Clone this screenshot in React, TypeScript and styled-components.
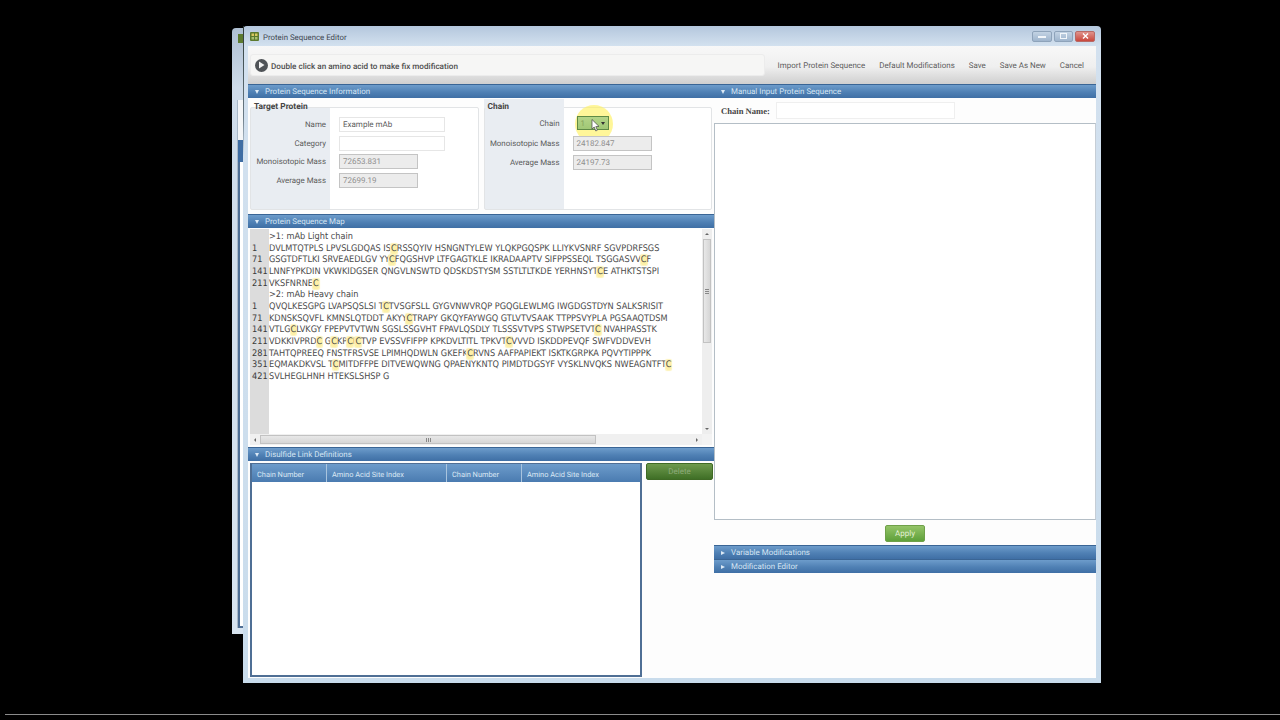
import React from "react";
import styled, { createGlobalStyle } from "styled-components";

const Global = createGlobalStyle`
  html, body { margin: 0; padding: 0; background: #000; }
  body { width: 1280px; height: 720px; overflow: hidden; font-family: Roboto, "Noto Sans", sans-serif; text-rendering: geometricPrecision; }
`;

const Desktop = styled.div`
  position: relative;
  width: 1280px;
  height: 720px;
  box-sizing: border-box;
  padding: 26px 0 0 243px;
  background: #000;
`;
const BackWindow = styled.div`
  position: absolute;
  left: 232px;
  top: 28px;
  width: 20px;
  height: 606px;
  background: linear-gradient(#aebfd2 0, #cfdcea 60px, #d8e4f0 100%);
  border-radius: 4px 0 0 0;
`;
const BackIcon = styled.div`
  position: absolute;
  left: 6px;
  top: 6px;
  width: 6px;
  height: 9px;
  background: #5c7a2e;
`;
const BackTab = styled.div`
  position: absolute;
  left: 5px;
  top: 72px;
  width: 15px;
  height: 528px;
  background: #f4f6f8;
  border-left: 1px solid #a9b8c8;
  &::before {
    content: "";
    position: absolute;
    left: 0;
    top: 40px;
    width: 15px;
    height: 22px;
    background: #3f6da3;
  }
  &::after {
    content: "";
    position: absolute;
    left: 0;
    top: 62px;
    width: 15px;
    height: 466px;
    box-sizing: border-box;
    border-left: 2px solid #4f6f95;
    border-bottom: 2px solid #4f6f95;
    background: #fff;
  }
`;
const BottomLine = styled.div`
  position: absolute;
  left: 5px;
  right: 0;
  top: 714px;
  height: 1px;
  background: #8b8b8b;
`;
const Window = styled.div`
  position: relative;
  width: 858px;
  height: 657px;
  box-sizing: border-box;
  padding: 0 5px 5px;
  background: linear-gradient(#b4c7dd 0, #d3e1ef 20px, #c9dcec 100%);
  border-radius: 4px 4px 0 0;
  display: flex;
  flex-direction: column;
  &::before {
    content: "";
    position: absolute;
    left: 0;
    top: 0;
    width: 1px;
    height: 130px;
    background: linear-gradient(#2f3b38, #6a7a86 70%, transparent);
  }
`;
const TitleBar = styled.div`
  height: 20px;
  display: flex;
  align-items: center;
  gap: 4px;
  margin-left: 2px;
`;
const TitleText = styled.span`
  flex: 1;
  padding-top: 2px;
  font-size: 7.85px;
  color: #3f4650;
`;
const WinControls = styled.div`
  display: flex;
  gap: 2px;
  margin-right: 1px;
`;
const WinBtn = styled.div<{ $w: number; $close?: boolean }>`
  width: ${(p) => p.$w}px;
  height: 11px;
  box-sizing: border-box;
  display: flex;
  align-items: center;
  justify-content: center;
  border: 1px solid ${(p) => (p.$close ? "#b86a66" : "#8ea3ba")};
  border-radius: 2px;
  background: ${(p) =>
    p.$close ? "linear-gradient(#e0938c,#c9473d)" : "linear-gradient(#c3d3e4,#9fb5cd)"};
  color: #fff;
`;
const Content = styled.div`
  flex: 1;
  min-height: 0;
  display: flex;
  flex-direction: column;
  background: #fdfdfd;
`;
const Toolbar = styled.div`
  height: 38px;
  box-sizing: border-box;
  padding: 8px 12px 8px 2px;
  display: flex;
  align-items: center;
  background: linear-gradient(#f8f8f8, #efefef 55%, #cfcfcf);
`;
const Hint = styled.div`
  width: 515px;
  height: 22px;
  flex: none;
  box-sizing: border-box;
  padding-left: 4px;
  display: flex;
  align-items: center;
  gap: 3px;
  border-radius: 3px;
  background: #f6f6f5;
  border: 1px solid #ececec;
  font-size: 8.15px;
  font-weight: 500;
  color: #4d4d4d;
  white-space: nowrap;
`;
const HintText = styled.span`
  padding-top: 1px;
`;
const PlayIcon = styled.div`
  width: 13px;
  height: 13px;
  border-radius: 50%;
  background: #4f5357;
  display: flex;
  align-items: center;
  justify-content: center;
`;
const ToolActions = styled.div`
  flex: 1;
  display: flex;
  justify-content: flex-end;
  gap: 14px;
  padding-top: 1px;
  font-size: 7.95px;
  color: #5c5c5c;
  white-space: nowrap;
`;
const Columns = styled.div`
  flex: 1;
  min-height: 0;
  display: flex;
`;
const LeftCol = styled.div`
  width: 466px;
  display: flex;
  flex-direction: column;
`;
const RightCol = styled.div`
  flex: 1;
  display: flex;
  flex-direction: column;
`;
const PanelHeader = styled.div`
  height: 14px;
  flex: none;
  box-sizing: border-box;
  padding: 0 0 0 6px;
  display: flex;
  align-items: center;
  gap: 6px;
  background: linear-gradient(#6d9ccb, #4f80b4 55%, #3f6fa5);
  border-top: 1px solid #3a6595;
  font-size: 7.95px;
  color: #d5e5f3;
`;
const Caret = styled.span<{ $open?: boolean }>`
  width: 0;
  height: 0;
  margin-left: 1px;
  ${(p) =>
    p.$open
      ? `border-left: 2.5px solid transparent; border-right: 2.5px solid transparent; border-top: 4px solid #dce9f5;`
      : `border-top: 2.5px solid transparent; border-bottom: 2.5px solid transparent; border-left: 4px solid #dce9f5;`}
`;
const InfoRow = styled.div`
  height: 116px;
  flex: none;
  box-sizing: border-box;
  padding: 9px 2px 4px;
  display: flex;
  gap: 5px;
`;
const Group = styled.div<{ $w: number; $tab?: boolean }>`
  position: relative;
  z-index: 0;
  width: ${(p) => p.$w}px;
  box-sizing: border-box;
  border: 1px solid #e2e4e6;
  border-radius: 2px;
  display: grid;
  grid-template-columns: 79px 1fr;
  background: linear-gradient(90deg, #e9edf2 79px, #fff 79px);
  ${(p) =>
    p.$tab &&
    `&::before { content: ""; position: absolute; left: -1px; top: -9px; width: 80px; height: 9px; background: #e9edf2; }`}
`;
const GroupTitle = styled.span`
  position: absolute;
  left: 3px;
  top: -6px;
  padding: 0 3px 0 0;
  font-size: 8.4px;
  font-weight: 700;
  color: #444;
`;
const Fields = styled.div<{ $top: number; $gap: number }>`
  grid-column: 1 / 3;
  padding-top: ${(p) => p.$top}px;
  display: flex;
  flex-direction: column;
  gap: ${(p) => p.$gap}px;
`;
const FieldRow = styled.div<{ $mb?: number }>`
  display: grid;
  grid-template-columns: 75px 1fr;
  column-gap: 13px;
  align-items: center;
  margin-bottom: ${(p) => p.$mb ?? 0}px;
`;
const FieldLabel = styled.span`
  font-size: 7.9px;
  text-align: right;
  color: #5a5a5a;
  white-space: nowrap;
`;
const TextBox = styled.div<{ $w: number; $disabled?: boolean }>`
  width: ${(p) => p.$w}px;
  height: 15px;
  box-sizing: border-box;
  padding-left: 3px;
  display: flex;
  align-items: center;
  background: ${(p) => (p.$disabled ? "#ececec" : "#fff")};
  border: 1px solid ${(p) => (p.$disabled ? "#c4c4c4" : "#e6e6e6")};
  font-size: 8px;
  color: ${(p) => (p.$disabled ? "#8f8f8f" : "#5d5d5d")};
`;
const Combo = styled.div`
  position: relative;
  width: 32px;
  height: 14px;
  margin-left: 4px;
  box-sizing: border-box;
  padding: 0 3px;
  display: flex;
  align-items: center;
  justify-content: space-between;
  border: 1px solid #5f8a45;
  background: linear-gradient(#b4d488, #a0c876);
  font-size: 8px;
  color: #86a35c;
`;
const Halo = styled.div`
  position: absolute;
  left: -3px;
  top: -12px;
  z-index: -1;
  width: 38px;
  height: 38px;
  border-radius: 50%;
  background: rgba(255, 240, 90, 0.62);
  pointer-events: none;
`;
const ComboValue = styled.span`
  position: relative;
`;
const ComboCaret = styled.span`
  position: relative;
  width: 0;
  height: 0;
  border-left: 2.5px solid transparent;
  border-right: 2.5px solid transparent;
  border-top: 3px solid #333;
`;
const Pointer = styled.svg`
  position: absolute;
  left: 13px;
  top: 2px;
`;
const MapBox = styled.div`
  flex: 1;
  min-height: 0;
  margin: 1px 2px 2px;
  display: grid;
  grid-template-columns: 1fr 10px;
  grid-template-rows: 1fr 11px;
  background: #fff;
`;
const SeqArea = styled.div`
  overflow: hidden;
  background: linear-gradient(90deg, #dcdcdc 19px, #fff 19px);
`;
const SeqLines = styled.div`
  padding-top: 3px;
`;
const SeqLine = styled.div`
  display: grid;
  grid-template-columns: 19px 1fr;
  height: 11.67px;
  line-height: 11.67px;
  font-family: "DejaVu Sans", Verdana, sans-serif;
  font-stretch: condensed;
  font-size: 9.1px;
  color: #4a4a4a;
  white-space: pre;
`;
const LineNo = styled.span`
  padding-left: 2px;
  color: #3a3a3a;
`;
const Cys = styled.span`
  background: #fdf0a8;
  box-shadow: 0 0 1px 1px #fdf3bb;
  border-radius: 1px;
`;
const VScroll = styled.div`
  grid-row: 1;
  grid-column: 2;
  display: flex;
  flex-direction: column;
  align-items: center;
  background: #eeeeee;
`;
const HScroll = styled.div`
  grid-row: 2;
  grid-column: 1;
  display: flex;
  align-items: center;
  background: #f0f0f0;
`;
const Corner = styled.div`
  grid-row: 2;
  grid-column: 2;
  background: #f3f3f3;
`;
const Arrow = styled.span<{ $dir: "up" | "down" | "left" | "right" }>`
  flex: none;
  width: 0;
  height: 0;
  margin: 4px;
  ${(p) =>
    p.$dir === "up"
      ? "border-left:2px solid transparent;border-right:2px solid transparent;border-bottom:2px solid #666;"
      : p.$dir === "down"
      ? "border-left:2px solid transparent;border-right:2px solid transparent;border-top:2px solid #666;"
      : p.$dir === "left"
      ? "border-top:2px solid transparent;border-bottom:2px solid transparent;border-right:2px solid #666;"
      : "border-top:2px solid transparent;border-bottom:2px solid transparent;border-left:2px solid #666;"}
`;
const VThumb = styled.div`
  width: 8px;
  height: 104px;
  flex: none;
  margin-bottom: auto;
  display: flex;
  align-items: center;
  justify-content: center;
  box-sizing: border-box;
  border: 1px solid #c2c2c2;
  background: linear-gradient(90deg, #e8e8e8, #d6d6d6);
  &::after { content: ""; width: 4px; height: 5px; background: repeating-linear-gradient(#888 0 1px, transparent 1px 2px); }
`;
const HThumb = styled.div`
  width: 336px;
  height: 9px;
  flex: none;
  margin-right: auto;
  display: flex;
  align-items: center;
  justify-content: center;
  box-sizing: border-box;
  border: 1px solid #c2c2c2;
  background: linear-gradient(#e8e8e8, #d6d6d6);
  &::after { content: ""; width: 5px; height: 4px; background: repeating-linear-gradient(90deg, #888 0 1px, transparent 1px 2px); }
`;
const DisulfideRow = styled.div`
  height: 217px;
  flex: none;
  box-sizing: border-box;
  padding: 2px 1px 0 2px;
  display: flex;
  gap: 4px;
`;
const LinkTable = styled.div`
  width: 392px;
  height: 214px;
  flex: none;
  box-sizing: border-box;
  border: 2px solid #4f6f95;
  border-top-width: 1px;
  background: #fff;
`;
const TableHead = styled.div`
  height: 18px;
  display: grid;
  grid-template-columns: 75px 120px 75px 1fr;
  background: linear-gradient(#6d9ccb, #4a7bb0);
`;
const HeadCell = styled.div`
  padding: 2px 0 0 5px;
  display: flex;
  align-items: center;
  border-right: 1px solid #a9c4de;
  font-size: 7.4px;
  color: #d9e7f4;
  &:last-child { border-right: 0; }
`;
const GreenButton = styled.div<{ $dark?: boolean; $w: number; $h: number }>`
  width: ${(p) => p.$w}px;
  height: ${(p) => p.$h}px;
  box-sizing: border-box;
  display: flex;
  align-items: center;
  justify-content: center;
  border-radius: 2px;
  font-size: 8px;
  border: 1px solid ${(p) => (p.$dark ? "#3f6a25" : "#6fa049")};
  color: ${(p) => (p.$dark ? "#8eab7a" : "#e3f0d4")};
  background: ${(p) =>
    p.$dark ? "linear-gradient(#6e9a4d,#3f6f26)" : "linear-gradient(#94c468,#5fa03a)"};
`;
const NameRow = styled.div`
  height: 25px;
  flex: none;
  box-sizing: border-box;
  padding: 4px 0 4px 7px;
  display: flex;
  align-items: center;
  gap: 6px;
`;
const NameLabel = styled.span`
  font-family: "Liberation Serif", serif;
  font-size: 8.6px;
  font-weight: 700;
  color: #444;
  white-space: nowrap;
`;
const NameInput = styled.div`
  width: 179px;
  height: 17px;
  box-sizing: border-box;
  background: #fff;
  border: 1px solid #efefef;
`;
const ManualArea = styled.div`
  height: 397px;
  flex: none;
  box-sizing: border-box;
  background: #fff;
  border: 1px solid #b4bec6;
  border-right-color: #c6ced6;
`;
const ApplyRow = styled.div`
  height: 25px;
  flex: none;
  display: flex;
  justify-content: center;
  padding-top: 5px;
  box-sizing: border-box;
`;

const sequences: [string, string][] = [
  ["", ">1: mAb Light chain"],
  ["1", "DVLMTQTPLS LPVSLGDQAS ISCRSSQYIV HSNGNTYLEW YLQKPGQSPK LLIYKVSNRF SGVPDRFSGS"],
  ["71", "GSGTDFTLKI SRVEAEDLGV YYCFQGSHVP LTFGAGTKLE IKRADAAPTV SIFPPSSEQL TSGGASVVCF"],
  ["141", "LNNFYPKDIN VKWKIDGSER QNGVLNSWTD QDSKDSTYSM SSTLTLTKDE YERHNSYTCE ATHKTSTSPI"],
  ["211", "VKSFNRNEC"],
  ["", ">2: mAb Heavy chain"],
  ["1", "QVQLKESGPG LVAPSQSLSI TCTVSGFSLL GYGVNWVRQP PGQGLEWLMG IWGDGSTDYN SALKSRISIT"],
  ["71", "KDNSKSQVFL KMNSLQTDDT AKYYCTRAPY GKQYFAYWGQ GTLVTVSAAK TTPPSVYPLA PGSAAQTDSM"],
  ["141", "VTLGCLVKGY FPEPVTVTWN SGSLSSGVHT FPAVLQSDLY TLSSSVTVPS STWPSETVTC NVAHPASSTK"],
  ["211", "VDKKIVPRDC GCKPCICTVP EVSSVFIFPP KPKDVLTITL TPKVTCVVVD ISKDDPEVQF SWFVDDVEVH"],
  ["281", "TAHTQPREEQ FNSTFRSVSE LPIMHQDWLN GKEFKCRVNS AAFPAPIEKT ISKTKGRPKA PQVYTIPPPK"],
  ["351", "EQMAKDKVSL TCMITDFFPE DITVEWQWNG QPAENYKNTQ PIMDTDGSYF VYSKLNVQKS NWEAGNTFTC"],
  ["421", "SVLHEGLHNH HTEKSLSHSP G"],
];

const Residues = ({ text }: { text: string }) => {
  if (text.startsWith(">")) return <span>{text}</span>;
  const parts = text.split("C");
  return (
    <span>
      {parts.map((part, i) => (
        <React.Fragment key={i}>
          {part}
          {i < parts.length - 1 && <Cys>C</Cys>}
        </React.Fragment>
      ))}
    </span>
  );
};

export default function App() {
  return (
    <Desktop>
      <Global />
      <BackWindow>
        <BackIcon />
        <BackTab />
      </BackWindow>
      <BottomLine />
      <Window>
        <TitleBar>
          <svg width="9" height="9" viewBox="0 0 9 9">
            <rect width="9" height="9" rx="1" fill="#5c7a2e" />
            <rect x="1.5" y="1.5" width="2.5" height="2.5" fill="#d9c860" />
            <rect x="5" y="1.5" width="2.5" height="2.5" fill="#d9c860" />
            <rect x="1.5" y="5" width="2.5" height="2.5" fill="#a8c070" />
            <rect x="5" y="5" width="2.5" height="2.5" fill="#a8c070" />
          </svg>
          <TitleText>Protein Sequence Editor</TitleText>
          <WinControls>
            <WinBtn $w={20}>
              <svg width="8" height="4" viewBox="0 0 8 4"><rect x="0" y="2" width="8" height="2" fill="#f2f6fa" /></svg>
            </WinBtn>
            <WinBtn $w={19}>
              <svg width="7" height="6" viewBox="0 0 7 6"><rect x="0.5" y="0.5" width="6" height="5" fill="none" stroke="#f2f6fa" /></svg>
            </WinBtn>
            <WinBtn $w={20} $close>
              <svg width="7" height="6" viewBox="0 0 7 6"><path d="M1 0.5 L6 5.5 M6 0.5 L1 5.5" stroke="#fff" strokeWidth="1.4" /></svg>
            </WinBtn>
          </WinControls>
        </TitleBar>
        <Content>
          <Toolbar>
            <Hint>
              <PlayIcon>
                <svg width="7" height="8" viewBox="0 0 7 8"><path d="M1 0.5 L6.5 4 L1 7.5 Z" fill="#f2f2f2" /></svg>
              </PlayIcon>
              <HintText>Double click an amino acid to make fix modification</HintText>
            </Hint>
            <ToolActions>
              <span>Import Protein Sequence</span>
              <span>Default Modifications</span>
              <span>Save</span>
              <span>Save As New</span>
              <span>Cancel</span>
            </ToolActions>
          </Toolbar>
          <Columns>
            <LeftCol>
              <PanelHeader>
                <Caret $open />
                Protein Sequence Information
              </PanelHeader>
              <InfoRow>
                <Group $w={229}>
                  <GroupTitle>Target Protein</GroupTitle>
                  <Fields $top={9} $gap={3.5}>
                    <FieldRow><FieldLabel>Name</FieldLabel><TextBox $w={106}>Example mAb</TextBox></FieldRow>
                    <FieldRow><FieldLabel>Category</FieldLabel><TextBox $w={106} /></FieldRow>
                    <FieldRow><FieldLabel>Monoisotopic Mass</FieldLabel><TextBox $w={79} $disabled>72653.831</TextBox></FieldRow>
                    <FieldRow><FieldLabel>Average Mass</FieldLabel><TextBox $w={79} $disabled>72699.19</TextBox></FieldRow>
                  </Fields>
                </Group>
                <Group $w={229} $tab>
                  <GroupTitle>Chain</GroupTitle>
                  <Fields $top={8} $gap={4}>
                    <FieldRow $mb={2}>
                      <FieldLabel>Chain</FieldLabel>
                      <Combo>
                        <Halo />
                        <ComboValue>1</ComboValue>
                        <ComboCaret />
                        <Pointer width="9" height="13" viewBox="0 0 9 13">
                          <path d="M1 0.5 L1 10 L3.2 8 L4.8 12 L6.4 11.2 L4.8 7.6 L8 7.4 Z" fill="#fff" stroke="#444" strokeWidth="0.7" />
                        </Pointer>
                      </Combo>
                    </FieldRow>
                    <FieldRow><FieldLabel>Monoisotopic Mass</FieldLabel><TextBox $w={79} $disabled>24182.847</TextBox></FieldRow>
                    <FieldRow><FieldLabel>Average Mass</FieldLabel><TextBox $w={79} $disabled>24197.73</TextBox></FieldRow>
                  </Fields>
                </Group>
              </InfoRow>
              <PanelHeader>
                <Caret $open />
                Protein Sequence Map
              </PanelHeader>
              <MapBox>
                <SeqArea>
                  <SeqLines>
                    {sequences.map(([no, text], i) => (
                      <SeqLine key={i}>
                        <LineNo>{no}</LineNo>
                        <Residues text={text} />
                      </SeqLine>
                    ))}
                  </SeqLines>
                </SeqArea>
                <VScroll>
                  <Arrow $dir="up" />
                  <VThumb />
                  <Arrow $dir="down" />
                </VScroll>
                <HScroll>
                  <Arrow $dir="left" />
                  <HThumb />
                  <Arrow $dir="right" />
                </HScroll>
                <Corner />
              </MapBox>
              <PanelHeader>
                <Caret $open />
                Disulfide Link Definitions
              </PanelHeader>
              <DisulfideRow>
                <LinkTable>
                  <TableHead>
                    <HeadCell>Chain Number</HeadCell>
                    <HeadCell>Amino Acid Site Index</HeadCell>
                    <HeadCell>Chain Number</HeadCell>
                    <HeadCell>Amino Acid Site Index</HeadCell>
                  </TableHead>
                </LinkTable>
                <GreenButton $dark $w={67} $h={17}>Delete</GreenButton>
              </DisulfideRow>
            </LeftCol>
            <RightCol>
              <PanelHeader>
                <Caret $open />
                Manual Input Protein Sequence
              </PanelHeader>
              <NameRow>
                <NameLabel>Chain Name:</NameLabel>
                <NameInput />
              </NameRow>
              <ManualArea />
              <ApplyRow>
                <GreenButton $w={40} $h={17}>Apply</GreenButton>
              </ApplyRow>
              <PanelHeader>
                <Caret />
                Variable Modifications
              </PanelHeader>
              <PanelHeader>
                <Caret />
                Modification Editor
              </PanelHeader>
            </RightCol>
          </Columns>
        </Content>
      </Window>
    </Desktop>
  );
}
